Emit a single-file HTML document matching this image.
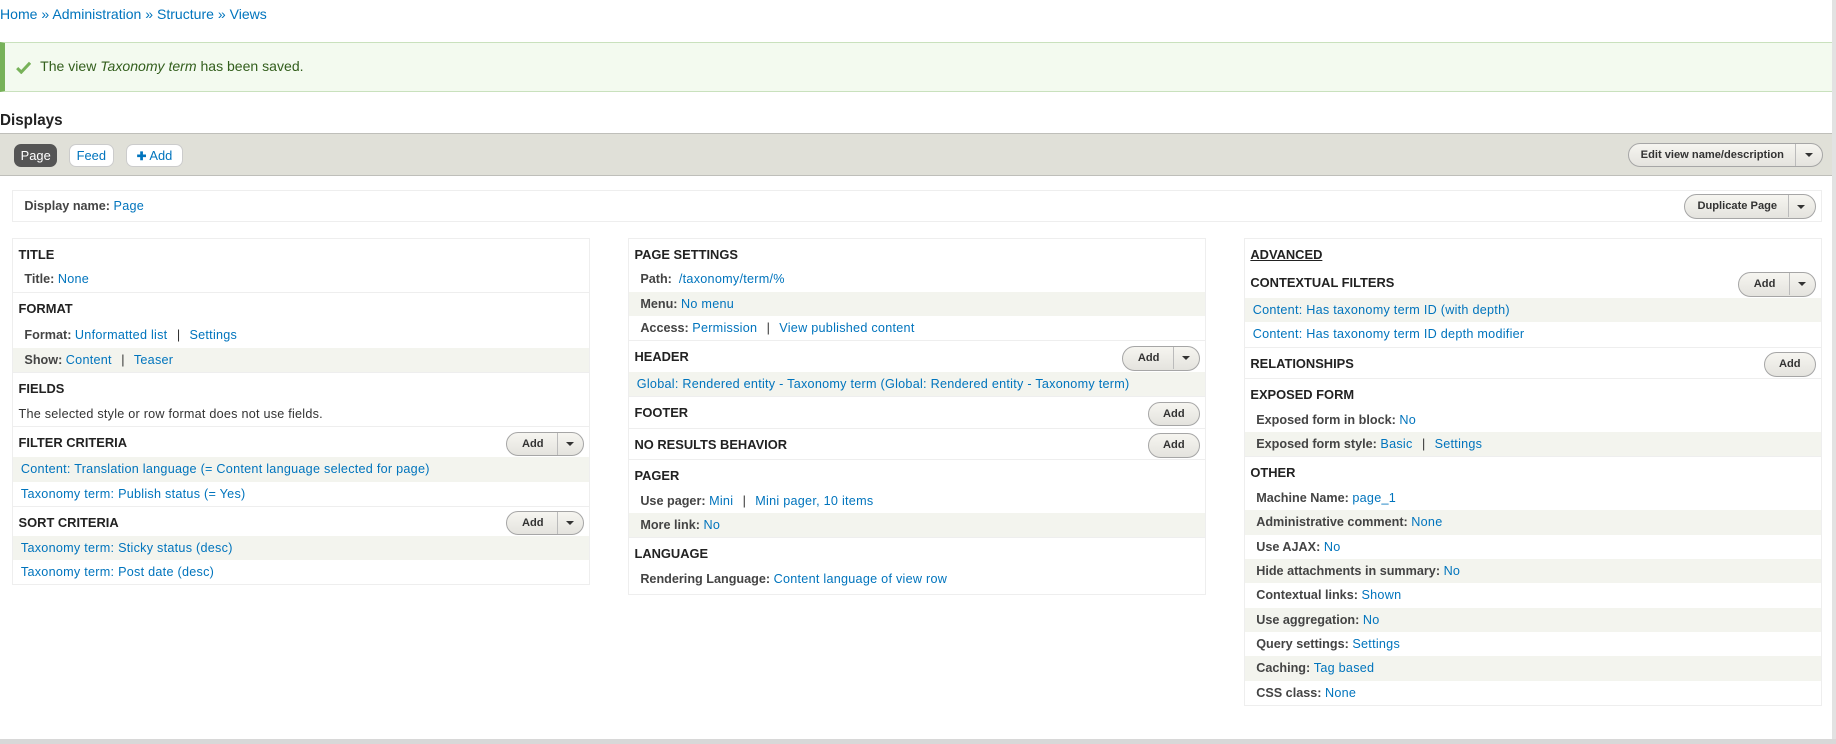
<!DOCTYPE html>
<html><head><meta charset="utf-8">
<style>
html{zoom:1.17092}
body{margin:0;width:1568px;height:635px;overflow:hidden;background:#fff;font-family:"Liberation Sans",Arial,sans-serif;color:#333;position:relative}
a{color:#0074bd;text-decoration:none}
.abs{position:absolute}
.bc{left:0;top:5px;font-size:12px}
.msg{left:0;top:36px;background:#f3faef;border:1px solid #c9e1bd;border-left:5px solid #77b259;box-sizing:border-box;width:1568px;height:43px}
.msg span{position:absolute;left:30px;top:13px;font-size:12px;color:#325e1c}
.disp{left:0;top:96px;font-size:13px;font-weight:bold;color:#222}
.bar{left:0;top:114px;width:1568px;height:36px;background:#e0e0d8;border-top:1px solid #bfbfba;border-bottom:1px solid #bfbfba;box-sizing:border-box}
.tab{position:absolute;top:8px;height:20px;line-height:19px;border-radius:6px;font-size:11px;text-align:center;box-sizing:border-box;border:1px solid #ccc;background:#fff;color:#0074bd}
.pill{position:absolute;height:21px;border:1px solid #a6a6a6;border-radius:11px;background:linear-gradient(#f6f5f0,#e4e3de);box-sizing:border-box;font-size:9.5px;font-weight:bold;color:#333;line-height:19px}
.pill .t{position:absolute;left:0;top:0;text-align:center}
.pill .d{position:absolute;top:0;right:0;width:22px;height:19px;border-left:1px solid #bbb}
.pill .d:after{content:"";position:absolute;left:7px;top:8px;border-left:3.5px solid transparent;border-right:3.5px solid transparent;border-top:4px solid #333}
.dn{left:10px;top:162px;width:1546px;height:28px;border:1px solid #eee;box-sizing:border-box}
.col{position:absolute;top:203px;width:494px;border:1px solid #eee;box-sizing:border-box}
.sec{position:relative;border-bottom:1px solid #eee}
.sec:last-child{border-bottom:0}
.h{height:24.5px;line-height:27px;padding-left:5px;font-size:11px;font-weight:bold;color:#222;position:relative}
.hb{height:26px}
.r{height:20.8px;line-height:20.8px;padding-left:10px;font-size:10.8px;white-space:nowrap}
.r a{letter-spacing:.22px}
.r b{color:#444}
.r.l{padding-left:7px}
.z{background:#f3f4ee}
.sep{margin:0 8px 0 8px;color:#333}
</style></head><body>
<div class="abs bc"><a>Home</a> <span style="color:#0074bd">»</span> <a>Administration</a> <span style="color:#0074bd">»</span> <a>Structure</a> <span style="color:#0074bd">»</span> <a>Views</a></div>
<div class="abs msg"><svg style="position:absolute;left:9px;top:15px" width="13" height="11" viewBox="0 0 13 11"><path d="M1 6 L4.5 9.5 L12 1.5" stroke="#77b259" stroke-width="2.6" fill="none"/></svg><span>The view <i>Taxonomy term</i> has been saved.</span></div>
<div class="abs disp">Displays</div>
<div class="abs bar">
 <div class="tab" style="left:12px;width:37px;background:#555;border-color:#555;color:#fff">Page</div>
 <div class="tab" style="left:59px;width:38px">Feed</div>
 <div class="tab" style="left:108px;width:48px"><b style="font-size:10px">✚</b> Add</div>
 <div class="pill" style="left:1390px;top:7px;width:167px"><span class="t" style="width:143px">Edit view name/description</span><span class="d"></span></div>
</div>
<div class="abs dn"><div class="r" style="line-height:26px"><b>Display name:</b> <a>Page</a></div>
 <div class="pill" style="left:1427px;top:3px;width:113px"><span class="t" style="width:90px">Duplicate Page</span><span class="d"></span></div>
</div>

<div class="col" style="left:10px">
 <div class="sec"><div class="h">TITLE</div><div class="r"><b>Title:</b> <a>None</a></div></div>
 <div class="sec"><div class="h hb">FORMAT</div><div class="r"><b>Format:</b> <a>Unformatted list</a><span class="sep">|</span><a>Settings</a></div><div class="r z"><b>Show:</b> <a>Content</a><span class="sep">|</span><a>Teaser</a></div></div>
 <div class="sec"><div class="h">FIELDS</div><div class="r" style="padding-left:5px;letter-spacing:.2px">The selected style or row format does not use fields.</div></div>
 <div class="sec"><div class="h hb">FILTER CRITERIA<div class="pill" style="right:4px;top:4px;width:67px"><span class="t" style="width:44px">Add</span><span class="d"></span></div></div><div class="r l z"><a>Content: Translation language (= Content language selected for page)</a></div><div class="r l"><a>Taxonomy term: Publish status (= Yes)</a></div></div>
 <div class="sec"><div class="h">SORT CRITERIA<div class="pill" style="right:4px;top:3px;width:67px"><span class="t" style="width:44px">Add</span><span class="d"></span></div></div><div class="r l z"><a>Taxonomy term: Sticky status (desc)</a></div><div class="r l"><a>Taxonomy term: Post date (desc)</a></div></div>
</div>

<div class="col" style="left:536px">
 <div class="sec"><div class="h">PAGE SETTINGS</div><div class="r"><b>Path:</b>&nbsp; <a>/taxonomy/term/%</a></div><div class="r z"><b>Menu:</b> <a>No menu</a></div><div class="r"><b>Access:</b> <a>Permission</a><span class="sep">|</span><a>View published content</a></div></div>
 <div class="sec"><div class="h hb">HEADER<div class="pill" style="right:4px;top:4px;width:67px"><span class="t" style="width:44px">Add</span><span class="d"></span></div></div><div class="r l z"><a>Global: Rendered entity - Taxonomy term (Global: Rendered entity - Taxonomy term)</a></div></div>
 <div class="sec"><div class="h hb">FOOTER<div class="pill" style="right:4px;top:4px;width:45px"><span class="t" style="width:43px">Add</span></div></div></div>
 <div class="sec"><div class="h hb">NO RESULTS BEHAVIOR<div class="pill" style="right:4px;top:4px;width:45px"><span class="t" style="width:43px">Add</span></div></div></div>
 <div class="sec"><div class="h">PAGER</div><div class="r"><b>Use pager:</b> <a>Mini</a><span class="sep">|</span><a>Mini pager, 10 items</a></div><div class="r z"><b>More link:</b> <a>No</a></div></div>
 <div class="sec"><div class="h">LANGUAGE</div><div class="r" style="height:23px"><b>Rendering Language:</b> <a>Content language of view row</a></div></div>
</div>

<div class="col" style="left:1062px">
 <div class="sec" style="border:0"><div class="h" style="text-decoration:underline">ADVANCED</div></div>
 <div class="sec"><div class="h hb">CONTEXTUAL FILTERS<div class="pill" style="right:4px;top:4px;width:67px"><span class="t" style="width:44px">Add</span><span class="d"></span></div></div><div class="r l z"><a>Content: Has taxonomy term ID (with depth)</a></div><div class="r l"><a>Content: Has taxonomy term ID depth modifier</a></div></div>
 <div class="sec"><div class="h hb">RELATIONSHIPS<div class="pill" style="right:4px;top:4px;width:45px"><span class="t" style="width:43px">Add</span></div></div></div>
 <div class="sec"><div class="h">EXPOSED FORM</div><div class="r"><b>Exposed form in block:</b> <a>No</a></div><div class="r z"><b>Exposed form style:</b> <a>Basic</a><span class="sep">|</span><a>Settings</a></div></div>
 <div class="sec"><div class="h">OTHER</div>
  <div class="r"><b>Machine Name:</b> <a>page_1</a></div>
  <div class="r z"><b>Administrative comment:</b> <a>None</a></div>
  <div class="r"><b>Use AJAX:</b> <a>No</a></div>
  <div class="r z"><b>Hide attachments in summary:</b> <a>No</a></div>
  <div class="r"><b>Contextual links:</b> <a>Shown</a></div>
  <div class="r z"><b>Use aggregation:</b> <a>No</a></div>
  <div class="r"><b>Query settings:</b> <a>Settings</a></div>
  <div class="r z"><b>Caching:</b> <a>Tag based</a></div>
  <div class="r"><b>CSS class:</b> <a>None</a></div>
 </div>
</div>
<div class="abs" style="left:1565px;top:0;width:3px;height:635px;background:#e2e2e2"></div>
<div class="abs" style="left:0;top:631px;width:1568px;height:4px;background:#d8d8d8"></div>
</body></html>
